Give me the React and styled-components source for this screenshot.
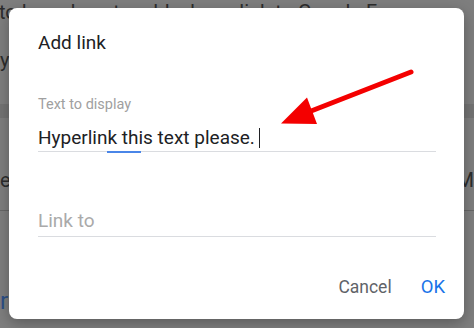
import styled, { createGlobalStyle } from "styled-components";

const GlobalStyle = createGlobalStyle`
  html, body {
    margin: 0;
    padding: 0;
    background: #7e7e7e;
  }
  * {
    box-sizing: border-box;
  }
`;

const Page = styled.div`
  position: relative;
  width: 474px;
  height: 328px;
  overflow: hidden;
  background: #7e7e7e;
  font-family: Roboto, "Liberation Sans", sans-serif;
`;

// document behind the scrim
const Doc = styled.div`
  display: flex;
  flex-direction: column;
  color: #2c2c2c;
  font-size: 20px;
  line-height: 24px;
`;

const DocLine = styled.div`
  display: flex;
  justify-content: space-between;
  height: 24px;
  margin-top: ${(p) => p.$top || 0}px;
  margin-left: ${(p) => p.$indent || 0}px;
  white-space: nowrap;
  color: ${(p) => p.$color || "inherit"};
  font-size: ${(p) => p.$size || 20}px;
`;

const Band = styled.div`
  height: ${(p) => p.$h}px;
  margin-top: ${(p) => p.$top}px;
  background: ${(p) => p.$color};
`;

const Dialog = styled.div`
  position: absolute;
  left: 9px;
  top: 8px;
  width: 455px;
  height: 311px;
  background: #fff;
  border-radius: 8px;
  box-shadow: 0 4px 14px rgba(0, 0, 0, 0.28);
  padding: 23px 28px 0 29px;
  display: flex;
  flex-direction: column;
`;

const Title = styled.h2`
  margin: 0;
  font-size: 19px;
  line-height: 24px;
  font-weight: 400;
  color: #202124;
`;

const Label = styled.div`
  margin-top: 41px;
  font-size: 14.5px;
  line-height: 18px;
  color: #a0a0a0;
`;

const Field = styled.div`
  position: relative;
  display: flex;
  align-items: center;
  margin-top: ${(p) => p.$top}px;
  padding-bottom: ${(p) => p.$pb}px;
  border-bottom: 1px solid #dadce0;
  font-size: 19px;
  line-height: 24px;
  color: ${(p) => (p.$placeholder ? "#aaaaaa" : "#202124")};
  white-space: pre;
`;

const Caret = styled.span`
  display: inline-block;
  width: 1.5px;
  height: 20px;
  margin-left: 4px;
  background: #202124;
`;

const FocusBar = styled.span`
  position: absolute;
  left: 69px;
  bottom: -2px;
  width: 34px;
  height: 2.5px;
  background: #4a86e8;
`;

const Actions = styled.div`
  display: flex;
  justify-content: flex-end;
  gap: 29px;
  margin-top: 39px;
  margin-right: -9px;
`;

const TextButton = styled.button`
  border: none;
  background: none;
  padding: 0;
  font-family: Roboto, "Liberation Sans", sans-serif;
  font-size: ${(p) => (p.$primary ? 18.5 : 17.5)}px;
  line-height: 22px;
  font-weight: 400;
  color: ${(p) => (p.$primary ? "#1a73e8" : "#5f6368")};
  cursor: pointer;
`;

const Arrow = styled.svg`
  position: absolute;
  left: 0;
  top: 0;
  pointer-events: none;
`;

export default function App() {
  return (
    <Page>
      <GlobalStyle />
      <Doc>
        <DocLine $indent={-1}>
          <span>to learn how to add a hyperlink to Google Forms</span>
        </DocLine>
        <DocLine $top={24}>
          <span>y</span>
        </DocLine>
        <Band $top={32} $h={14} $color="#737373" />
        <DocLine $top={50}>
          <span>e</span>
          <span>M</span>
        </DocLine>
        <Band $top={18} $h={1} $color="#666" />
        <DocLine $top={78} $size={24} $color="#2d4f86">
          <span>ro</span>
        </DocLine>
      </Doc>

      <Dialog>
        <Title>Add link</Title>
        <Label>Text to display</Label>
        <Field $top={12} $pb={1}>
          Hyperlink this text please.
          <Caret />
          <FocusBar />
        </Field>
        <Field $top={57} $pb={3} $placeholder>
          Link to
        </Field>
        <Actions>
          <TextButton>Cancel</TextButton>
          <TextButton $primary>OK</TextButton>
        </Actions>
      </Dialog>

      <Arrow width="474" height="328" viewBox="0 0 474 328">
        <line x1="411" y1="72" x2="306" y2="113" stroke="#f40000" strokeWidth="5" strokeLinecap="round" />
        <polygon points="281,123.5 307,97.5 317,124" fill="#f40000" />
      </Arrow>
    </Page>
  );
}
